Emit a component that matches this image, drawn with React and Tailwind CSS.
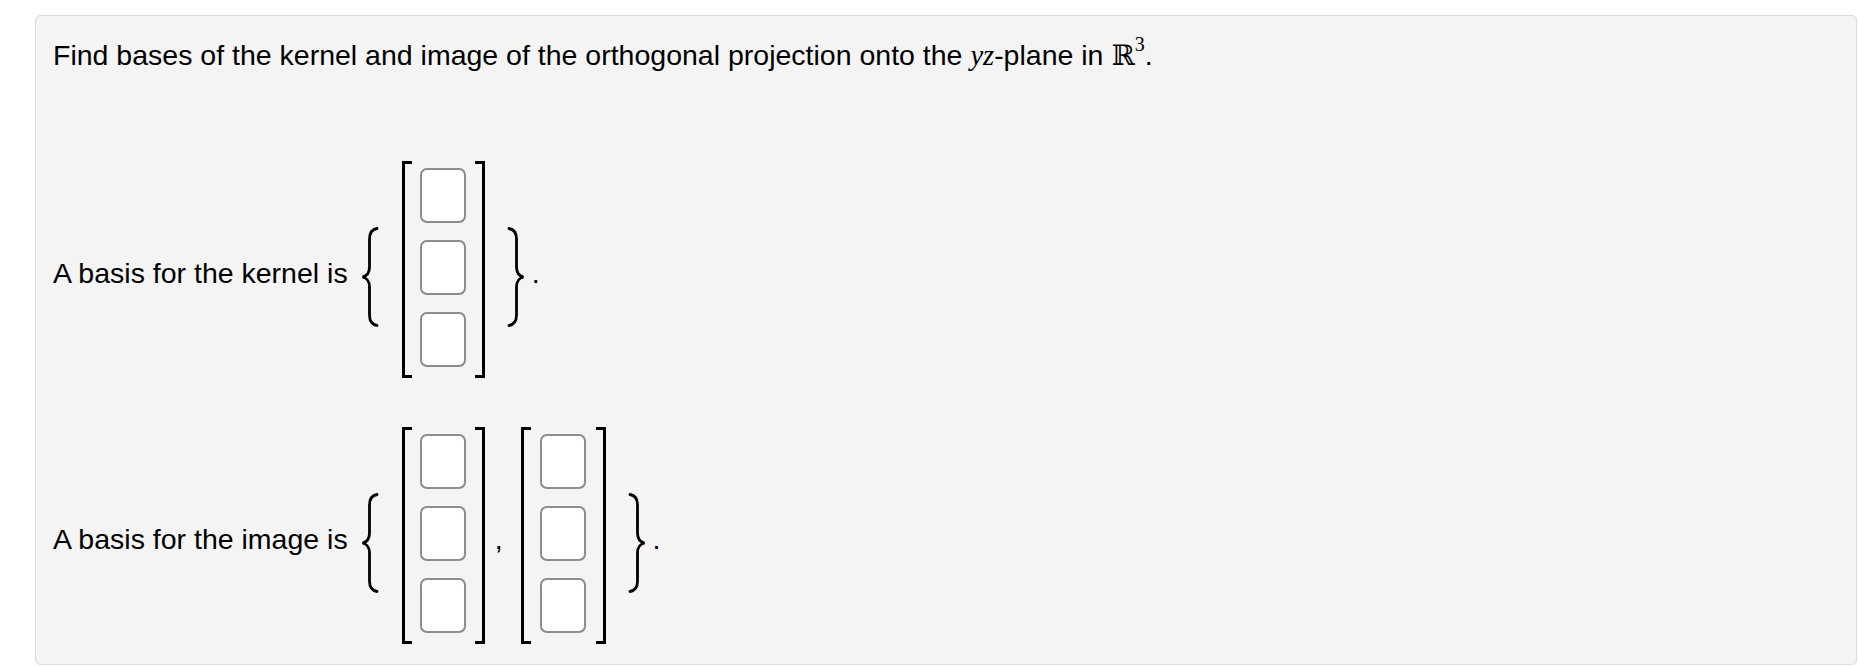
import React from "react";

function Brace({ right = false }) {
  return (
    <svg width="20" height="100" viewBox="0 0 20 100" className="shrink-0" style={right ? { transform: "scaleX(-1)" } : undefined}>
      <path
        d="M17 1.5 C11.5 2.5 9.5 6 9.5 12 L9.5 40 C9.5 46 7 49 2.5 50 C7 51 9.5 54 9.5 60 L9.5 88 C9.5 94 11.5 97.5 17 98.5"
        fill="none"
        stroke="#000"
        strokeWidth="2.8"
        strokeLinecap="round"
      />
    </svg>
  );
}

function Cell() {
  return <div className="w-[46px] h-[55px] rounded-[7px] border-2 border-[#8c8c8c] bg-white" />;
}

function Matrix({ wide = false }) {
  return (
    <div className="flex items-stretch h-[217px] shrink-0">
      <div className="w-[10px] border-l-[3px] border-t-[3px] border-b-[3px] border-black" />
      <div className={wide ? "flex flex-col gap-[17px] pt-[7px] pl-[9px] pr-[10px]" : "flex flex-col gap-[17px] pt-[7px] pl-[8px] pr-[9px]"}>
        <Cell />
        <Cell />
        <Cell />
      </div>
      <div className="w-[10px] border-r-[3px] border-t-[3px] border-b-[3px] border-black" />
    </div>
  );
}

export default function App() {
  return (
    <div className="w-[1858px] h-[666px] bg-white pt-[15px] pl-[35px] pr-[1px]" style={{ fontFamily: '"Liberation Sans", Arial, sans-serif' }}>
      <div className="h-[650px] rounded-[5px] border border-[#dcdcdc] bg-[#f4f4f4] pl-[17px] pt-[23px] text-[28.5px] leading-[32px] text-black">
        <p>
          Find bases of the kernel and image of the orthogonal projection onto the{" "}
          <span className="italic" style={{ fontFamily: '"Liberation Serif", "DejaVu Serif", serif' }}>yz</span>-plane in{" "}
          <span style={{ fontFamily: '"DejaVu Serif", serif' }} className="text-[28px]">ℝ</span>
          <sup className="relative -top-[14px] text-[20px] align-baseline" style={{ fontFamily: '"Liberation Serif", serif' }}>3</sup>.
        </p>

        <div className="mt-[89px] flex items-center">
          <span className="mt-[7px]">A basis for the kernel is</span>
          <div className="ml-[12px] mr-[22px] mt-[14px]"><Brace /></div>
          <Matrix />
          <div className="ml-[21px] mt-[14px]"><Brace right /></div>
          <span className="mt-[7px] ml-[6px]">.</span>
        </div>

        <div className="mt-[49px] flex items-center">
          <span className="mt-[7px]">A basis for the image is</span>
          <div className="ml-[12px] mr-[22px] mt-[14px]"><Brace /></div>
          <Matrix />
          <span className="mt-[7px] ml-[10px] mr-[18px]">,</span>
          <Matrix wide />
          <div className="ml-[21px] mt-[14px]"><Brace right /></div>
          <span className="mt-[7px] ml-[6px]">.</span>
        </div>
      </div>
    </div>
  );
}
